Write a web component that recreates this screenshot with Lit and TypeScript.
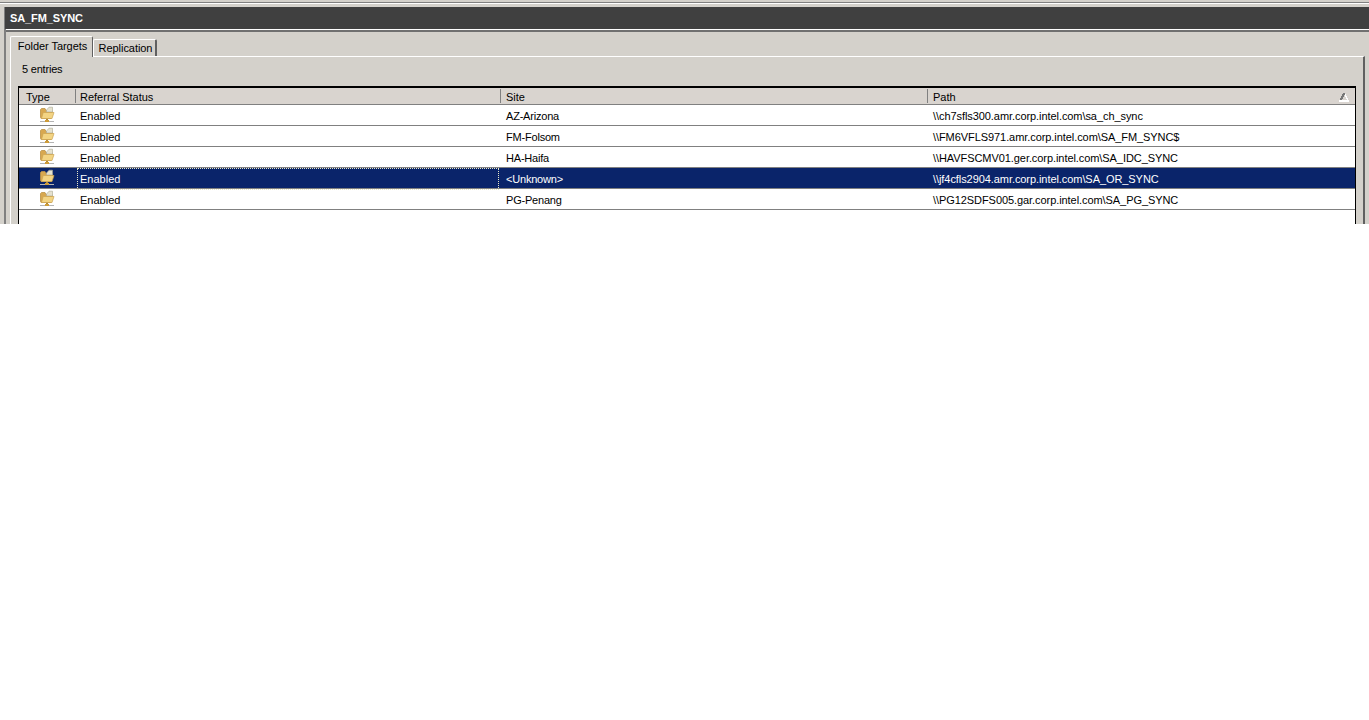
import { LitElement, html, css, svg } from "lit";
import { customElement } from "lit/decorators.js";

const ROWS = [
  { status: "Enabled", site: "AZ-Arizona", path: "\\\\ch7sfls300.amr.corp.intel.com\\sa_ch_sync" },
  { status: "Enabled", site: "FM-Folsom", path: "\\\\FM6VFLS971.amr.corp.intel.com\\SA_FM_SYNC$" },
  { status: "Enabled", site: "HA-Haifa", path: "\\\\HAVFSCMV01.ger.corp.intel.com\\SA_IDC_SYNC" },
  { status: "Enabled", site: "<Unknown>", path: "\\\\jf4cfls2904.amr.corp.intel.com\\SA_OR_SYNC", selected: true },
  { status: "Enabled", site: "PG-Penang", path: "\\\\PG12SDFS005.gar.corp.intel.com\\SA_PG_SYNC" },
];

const folderIcon = svg`<svg class="ficon" width="16" height="17" viewBox="0 0 16 17">
  <rect x="1" y="15" width="14" height="1" fill="#b4b4b4"/>
  <rect x="7" y="12" width="2" height="3" fill="#b08a3a"/>
  <rect x="6" y="14" width="4" height="2" fill="#cf9c38"/>
  <path d="M1.5 3.5 L1.5 11.5 Q1.5 12.5 3 12.5 L12 12.5 L13 7 L13 4.5 L7 4.5 L6 2.5 L2.5 2.5 Z" fill="#d8a850" stroke="#bb9348" stroke-width="0.8"/>
  <path d="M7.5 4 L10 1.2 L13.5 1.2 L13.5 6 L7.5 6 Z" fill="#e6e2cf" stroke="#aaa892" stroke-width="0.6"/>
  <path d="M2.5 12.5 L4.2 6.5 L15 6.5 L13 12.5 Z" fill="#f3d483" stroke="#cba452" stroke-width="0.7"/>
</svg>`;

const sortArrow = svg`<svg class="sort" width="10" height="9" viewBox="0 0 10 9" shape-rendering="crispEdges">
  <path d="M4 0 H6 V2 H5 V4 H4 V6 H3 V7 H1 V5 H2 V3 H3 V1 H4 Z" fill="#777777"/>
  <path d="M6 1 H7 V3 H8 V5 H9 V7 H10 V9 H0 V7 H8 V6 H7 V4 H6 Z" fill="#ffffff"/>
</svg>`;

@customElement("app-root")
export class AppRoot extends LitElement {
  static styles = css`
    :host {
      display: block;
      height: 224px;
      overflow: hidden;
      background: #d4d1cb;
      font-family: "Liberation Sans", Arial, sans-serif;
      font-size: 11px;
      color: #000;
    }
    .strip {
      height: 7px;
      box-sizing: border-box;
      padding-top: 2px;
    }
    .strip-line {
      height: 1px;
      background: #808080;
    }
    .strip-white {
      height: 1px;
      background: #ffffff;
    }
    .frame {
      margin-left: 4px;
      border-left: 2px solid #808080;
      height: 217px;
    }
    .title {
      height: 22px;
      margin-left: -1px;
      box-sizing: border-box;
      padding-left: 5px;
      background: #404040;
      color: #fff;
      font-weight: bold;
      line-height: 22px;
      letter-spacing: -0.1px;
    }
    .title-rule {
      height: 3px;
      box-sizing: border-box;
      border-top: 1px solid #fff;
      background: #707070;
      margin-bottom: 4px;
    }
    .content {
      padding: 0 4px 0 4px;
    }
    .tabs {
      display: flex;
      align-items: flex-end;
      height: 20px;
      position: relative;
      z-index: 1;
    }
    .tab {
      box-sizing: border-box;
      background: #d4d1cb;
      border-top: 1px solid #fff;
      border-left: 1px solid #fff;
      border-right: 2px solid #606060;
      border-radius: 2px 2px 0 0;
      padding-left: 2px;
      text-align: center;
      letter-spacing: -0.05px;
    }
    .tab.active {
      width: 83px;
      height: 21px;
      margin-bottom: -1px;
      line-height: 18px;
      border-right-width: 1px;
    }
    .tab.other {
      width: 64px;
      height: 17px;
      line-height: 17px;
    }
    .panel {
      border-top: 1px solid #fff;
      border-left: 1px solid #fff;
      border-right: 2px solid #606060;
      padding: 0 7px;
      height: 170px;
    }
    .count {
      height: 29px;
      box-sizing: border-box;
      padding: 5px 0 0 4px;
      line-height: 14px;
      letter-spacing: -0.2px;
    }
    .list {
      border-left: 1px solid #000;
      border-right: 1px solid #000;
      border-top: 2px solid #000;
      background: #fff;
      height: 140px;
    }
    .row {
      display: grid;
      grid-template-columns: 56px 425px 427px 1fr;
    }
    .head {
      height: 17px;
      box-sizing: border-box;
      background: #d9d4cf;
      border-bottom: 1px solid #808080;
    }
    .head .cell {
      box-sizing: border-box;
      padding: 2px 0 0 5px;
      border-left: 1px solid #808080;
      height: 14px;
      line-height: 12px;
      margin-top: 1px;
      display: flex;
      justify-content: space-between;
      align-items: center;
    }
    .head .cell:first-child {
      padding-left: 7px;
      border-left: none;
    }
    .head .cell:nth-child(2) {
      padding-left: 4px;
    }
    .sort {
      margin-right: 6px;
    }
    .data {
      height: 21px;
      box-sizing: border-box;
      border-bottom: 1px solid #808080;
      line-height: 22px;
    }
    .data .cell {
      padding-left: 6px;
      white-space: nowrap;
    }
    .data .cell.site {
      letter-spacing: -0.2px;
    }
    .data .cell.path {
      letter-spacing: -0.07px;
    }
    .data .cell.status {
      padding-left: 5px;
    }
    .data .cell.type {
      display: flex;
      justify-content: flex-start;
      padding-left: 20px;
    }
    .ficon {
      margin-top: 1px;
    }
    .data.selected {
      background: #0a246a;
      color: #fff;
    }
    .data.selected .cell.status {
      outline: 1px dotted #e8e8c8;
      outline-offset: -1px;
      margin: 0 1px 0 2px;
      padding-left: 3px;
    }
  `;

  render() {
    return html`
      <div class="strip">
        <div class="strip-line"></div>
        <div class="strip-white"></div>
      </div>
      <div class="frame">
        <div class="title">SA_FM_SYNC</div>
        <div class="title-rule"></div>
        <div class="content">
          <div class="tabs">
            <div class="tab active">Folder Targets</div>
            <div class="tab other">Replication</div>
          </div>
          <div class="panel">
            <div class="count">5 entries</div>
            <div class="list">
              <div class="row head">
                <div class="cell">Type</div>
                <div class="cell">Referral Status</div>
                <div class="cell">Site</div>
                <div class="cell">Path ${sortArrow}</div>
              </div>
              ${ROWS.map(
                (r) => html`
                  <div class="row data ${r.selected ? "selected" : ""}">
                    <div class="cell type">${folderIcon}</div>
                    <div class="cell status">${r.status}</div>
                    <div class="cell site">${r.site}</div>
                    <div class="cell path">${r.path}</div>
                  </div>
                `
              )}
            </div>
          </div>
        </div>
      </div>
    `;
  }
}
